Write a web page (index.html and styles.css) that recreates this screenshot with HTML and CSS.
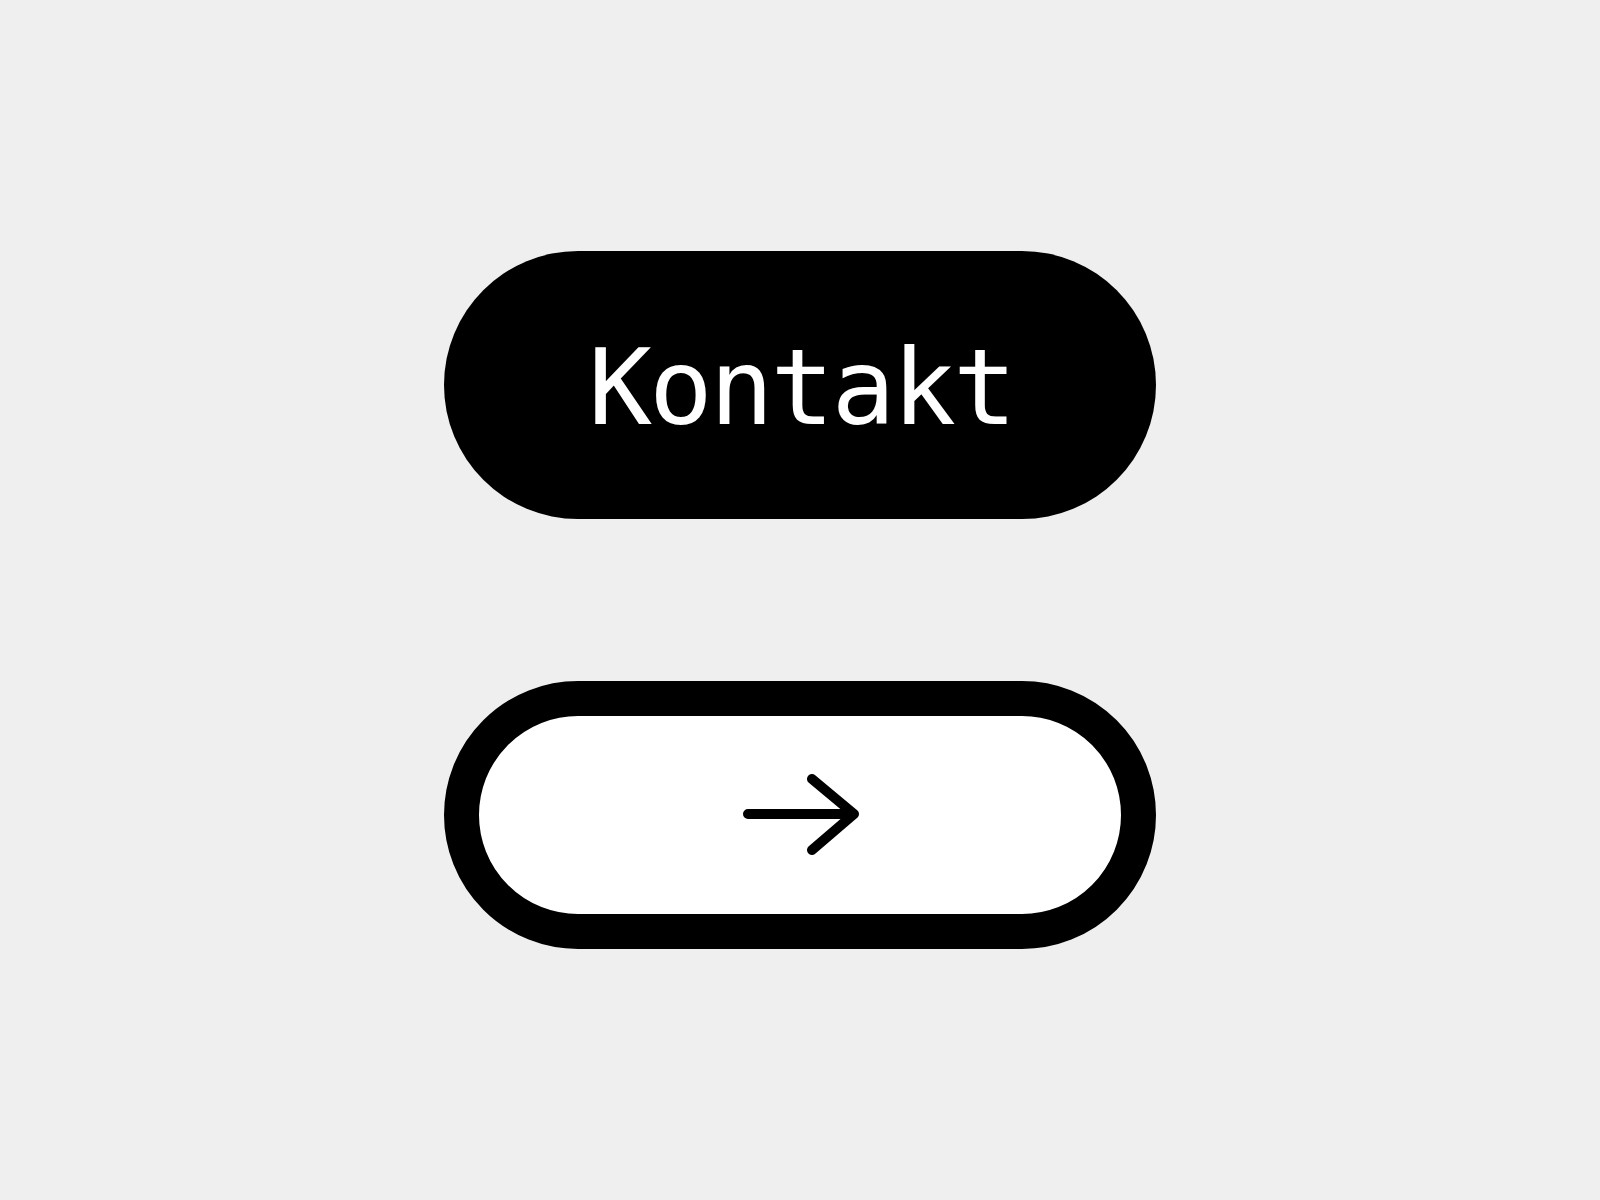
FILE: index.html
```html
<!DOCTYPE html>
<html lang="de">
<head>
<meta charset="utf-8">
<title>Kontakt</title>
<link rel="stylesheet" href="styles.css">
</head>
<body>
<main class="stack">
  <a class="pill pill--solid" href="#kontakt">Kontakt</a>
  <a class="pill pill--outline" href="#weiter" aria-label="Weiter">
    <svg class="arrow" width="124" height="86" viewBox="0 0 124 86" aria-hidden="true">
      <path d="M8 42 H114 M72 7 L114 42 L72 78" fill="none" stroke="#000" stroke-width="10" stroke-linecap="round" stroke-linejoin="round"/>
    </svg>
  </a>
</main>
</body>
</html>
```

FILE: styles.css
```css
html, body {
  margin: 0;
  height: 100%;
}

body {
  background: #efefef;
}

.stack {
  height: 100vh;
  display: flex;
  flex-direction: column;
  align-items: center;
  justify-content: center;
  gap: 162px;
}

.pill {
  box-sizing: border-box;
  width: 712px;
  height: 268px;
  border-radius: 134px;
  display: flex;
  align-items: center;
  justify-content: center;
  text-decoration: none;
}

.pill--solid {
  background: #000;
  color: #fff;
  font-family: "DejaVu Sans Mono", "Liberation Mono", monospace;
  font-size: 106px;
  letter-spacing: -3px;
  line-height: 1;
  padding-top: 6px;
  padding-left: 2px;
}

.pill--outline {
  background: #fff;
  border: 35px solid #000;
}

.arrow {
  display: block;
  margin-left: 4px;
}
```
